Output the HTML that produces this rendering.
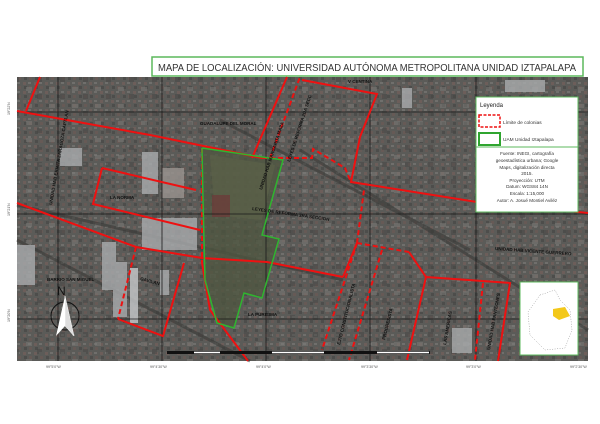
<!DOCTYPE html>
<html><head><meta charset="utf-8"><style>
html,body{margin:0;padding:0;background:#fff;width:600px;height:424px;overflow:hidden;font-family:"Liberation Sans",sans-serif}
</style></head><body>
<svg width="600" height="424" viewBox="0 0 600 424" xmlns="http://www.w3.org/2000/svg" font-family="Liberation Sans, sans-serif">
<defs>
<pattern id="tex" width="11" height="9" patternUnits="userSpaceOnUse">
<rect width="11" height="9" fill="#5e5d5b"/>
<rect x="1" y="1" width="3" height="3" fill="#76625e"/>
<rect x="6" y="1" width="3" height="2" fill="#7b7a78"/>
<rect x="2" y="5" width="3" height="3" fill="#4a4a48"/>
<rect x="7" y="5" width="3" height="3" fill="#6e5c58"/>
</pattern>
<pattern id="tex2" width="23" height="17" patternUnits="userSpaceOnUse">
<rect width="23" height="17" fill="none"/>
<rect x="3" y="2" width="6" height="4" fill="#8d8b88" opacity="0.5"/>
<rect x="14" y="9" width="5" height="5" fill="#3f403d" opacity="0.5"/>
</pattern>
</defs>
<rect x="152" y="57" width="431" height="19" fill="#fff" stroke="#5cb85c" stroke-width="1.5"/>
<text x="158" y="71" font-size="10" fill="#333" textLength="418" lengthAdjust="spacingAndGlyphs">MAPA DE LOCALIZACIÓN: UNIVERSIDAD AUTÓNOMA METROPOLITANA UNIDAD IZTAPALAPA</text>
<rect x="17" y="77" width="571" height="284" fill="url(#tex)"/>
<rect x="17" y="77" width="571" height="284" fill="url(#tex2)"/>
<rect x="17" y="77" width="571" height="284" fill="#555553" opacity="0.3"/>
<g stroke="#3a3a38" stroke-width="3" opacity="0.6">
<line x1="17" y1="205" x2="343" y2="280"/><line x1="220" y1="120" x2="470" y2="250"/><line x1="300" y1="150" x2="588" y2="330"/><line x1="17" y1="240" x2="250" y2="361"/>
</g>
<g fill="#a9abad" opacity="0.8">
<rect x="60" y="148" width="22" height="18"/><rect x="142" y="152" width="16" height="42"/><rect x="162" y="168" width="22" height="30" fill="#9a9490"/>
<rect x="142" y="218" width="55" height="32"/><rect x="102" y="242" width="14" height="48"/><rect x="17" y="245" width="18" height="40"/>
<rect x="113" y="262" width="14" height="55"/><rect x="130" y="268" width="8" height="55" fill="#c8cbcd"/><rect x="160" y="270" width="9" height="25"/>
<rect x="452" y="328" width="20" height="25"/><rect x="505" y="80" width="40" height="12"/><rect x="402" y="88" width="10" height="20"/><rect x="512" y="138" width="30" height="25" fill="#8a8a8a"/>
</g>
<polygon points="202,148 283,160 262,235 279,239 262,298 244,293 234,328 217,323 205,280 203,200" fill="#4d553f" opacity="0.75"/>
<polygon points="210,155 275,165 262,220 215,215" fill="#5b6148" opacity="0.7"/>
<rect x="212" y="195" width="18" height="22" fill="#6b3c3a" opacity="0.8"/>
<g stroke="#1a1a1a" stroke-width="0.8">
<line x1="58" y1="77" x2="58" y2="361"/><line x1="162" y1="77" x2="162" y2="361"/><line x1="266" y1="77" x2="266" y2="361"/><line x1="370" y1="77" x2="370" y2="361"/><line x1="476" y1="77" x2="476" y2="361"/>
<line x1="17" y1="112" x2="588" y2="112"/><line x1="17" y1="214" x2="588" y2="214"/><line x1="17" y1="319" x2="588" y2="319"/>
</g>
<g fill="none" stroke="#ee1111" stroke-width="2">
<polyline points="17,111 150,135 262,158"/>
<polyline points="17,203 136,247 202,258 267,262 343,277"/>
<polyline points="40,77 26,111"/>
<polyline points="252,158 287,77"/>
<polyline points="302,80 377,94 360,137 351,182 477,202 588,213"/>
<polyline points="102,168 196,190"/><polyline points="102,168 93,204 200,230"/>
<polyline points="202,263 210,310 248,361"/>
<polyline points="184,263 163,336 118,319"/>
<polyline points="343,277 357,243"/>
<polyline points="409,252 426,277 510,283 498,361"/>
<polyline points="426,277 407,360"/>
</g>
<g fill="none" stroke="#ee1111" stroke-width="2" stroke-dasharray="5,3">
<polyline points="270,158 300,77"/>
<polyline points="262,158 312,158 313,149 345,168 351,182"/>
<polyline points="202,148 202,263"/>
<polyline points="136,247 118,319"/>
<polyline points="357,243 364,190"/>
<polyline points="357,243 409,252"/>
<polyline points="357,243 322,350"/>
<polyline points="382,250 349,360"/>
<polyline points="483,283 475,360"/>
</g>
<polyline points="202,148 283,160 262,235 279,239 262,298 244,293 234,328 217,323 205,280 203,200 202,148" fill="none" stroke="#2fb52f" stroke-width="1.5"/>
<g font-size="4.5" font-weight="bold" fill="#111">
<text x="200" y="125">GUADALUPE DEL MORAL</text>
<text x="110" y="199">LA NORMA</text>
<text x="252" y="210" transform="rotate(8 252 210)">LEYES DE REFORMA 3RA SECCION</text>
<text x="348" y="83">V CENTINA</text>
<text x="47" y="281">BARRIO SAN MIGUEL</text>
<text x="140" y="280" transform="rotate(15 140 280)">GAVILAN</text>
<text x="248" y="316">LA PURISIMA</text>
<text x="495" y="250" transform="rotate(4 495 250)">UNIDAD HAB VICENTE GUERRERO</text>
<text x="52" y="205" transform="rotate(-80 52 205)">UNIDAD HAB ERMITA ZARAGOZA CAPTLAN</text>
<text x="262" y="190" transform="rotate(-72 262 190)">UNIDAD HAB MARGARITA MAZA</text>
<text x="290" y="162" transform="rotate(-72 290 162)">LEYES DE REFORMA 2DA SECC</text>
<text x="340" y="345" transform="rotate(-76 340 345)">EJTO CONSTITUCIONALISTA</text>
<text x="385" y="340" transform="rotate(-76 385 340)">PROGRESISTA</text>
<text x="446" y="345" transform="rotate(-80 446 345)">LAS AMERICAS</text>
<text x="490" y="350" transform="rotate(-80 490 350)">UNIDAD HAB PANTEONES</text>
</g>
<text x="57" y="295" font-size="12" fill="#111">N</text>
<circle cx="65" cy="316" r="14" fill="none" stroke="#111" stroke-width="1"/>
<polygon points="65,296 56,336 65,326" fill="#fff"/><polygon points="65,296 74,336 65,326" fill="#ddd" stroke="#fff" stroke-width="0.5"/>
<rect x="167" y="351" width="263" height="3" fill="#111"/>
<rect x="194" y="351.7" width="26" height="1.6" fill="#fff"/><rect x="272" y="351.7" width="52" height="1.6" fill="#fff"/><rect x="377" y="351.7" width="52" height="1.6" fill="#fff"/>
<rect x="476" y="97" width="102" height="95" fill="#fff" stroke="#5cb85c" stroke-width="1"/>
<line x1="476" y1="147" x2="578" y2="147" stroke="#5cb85c"/>
<text x="480" y="107" font-size="6" fill="#222">Leyenda</text>
<rect x="479" y="115" width="21" height="12" fill="none" stroke="#ee1111" stroke-width="1.5" stroke-dasharray="3,1.5"/>
<text x="503" y="124" font-size="4.8" fill="#333">Límite de colonias</text>
<rect x="479" y="133" width="21" height="12" fill="none" stroke="#2fa52f" stroke-width="2"/>
<text x="503" y="141" font-size="4.8" fill="#333">UAM Unidad Iztapalapa</text>
<rect x="476" y="147" width="102" height="65" fill="#fff" stroke="#5cb85c"/>
<g font-size="4.6" fill="#333" text-anchor="middle">
<text x="527" y="155">Fuente: INEGI, cartografía</text>
<text x="527" y="162">geoestadística urbana; Google</text>
<text x="527" y="169">Maps, digitalización directa</text>
<text x="527" y="175">2015.</text>
<text x="527" y="182">Proyección: UTM</text>
<text x="527" y="188">Datum: WGS84 14N</text>
<text x="527" y="195">Escala: 1:15,000</text>
<text x="527" y="202">Autor: A. Josué Montiel Aviléz</text>
</g>
<rect x="520" y="282" width="58" height="73" fill="#fff" stroke="#5cb85c" stroke-width="1"/>
<path d="M540 295 L555 290 L560 300 L570 310 L572 330 L565 348 L545 350 L530 335 L528 312 Z" fill="none" stroke="#888" stroke-width="0.5" stroke-dasharray="1,1.5"/>
<polygon points="553,309 565,307 570,316 559,320 553,316" fill="#f3c81a"/>
<g font-size="3.6" fill="#555">
<text x="46" y="368">99°5'0"W</text><text x="150" y="368">99°4'30"W</text><text x="256" y="368">99°4'0"W</text><text x="361" y="368">99°3'30"W</text><text x="466" y="368">99°3'0"W</text><text x="570" y="368">99°2'30"W</text>
<text x="10" y="115" transform="rotate(-90 10 115)">19°22'N</text>
<text x="10" y="216" transform="rotate(-90 10 216)">19°21'N</text>
<text x="10" y="322" transform="rotate(-90 10 322)">19°20'N</text>
</g>
</svg>
</body></html>
